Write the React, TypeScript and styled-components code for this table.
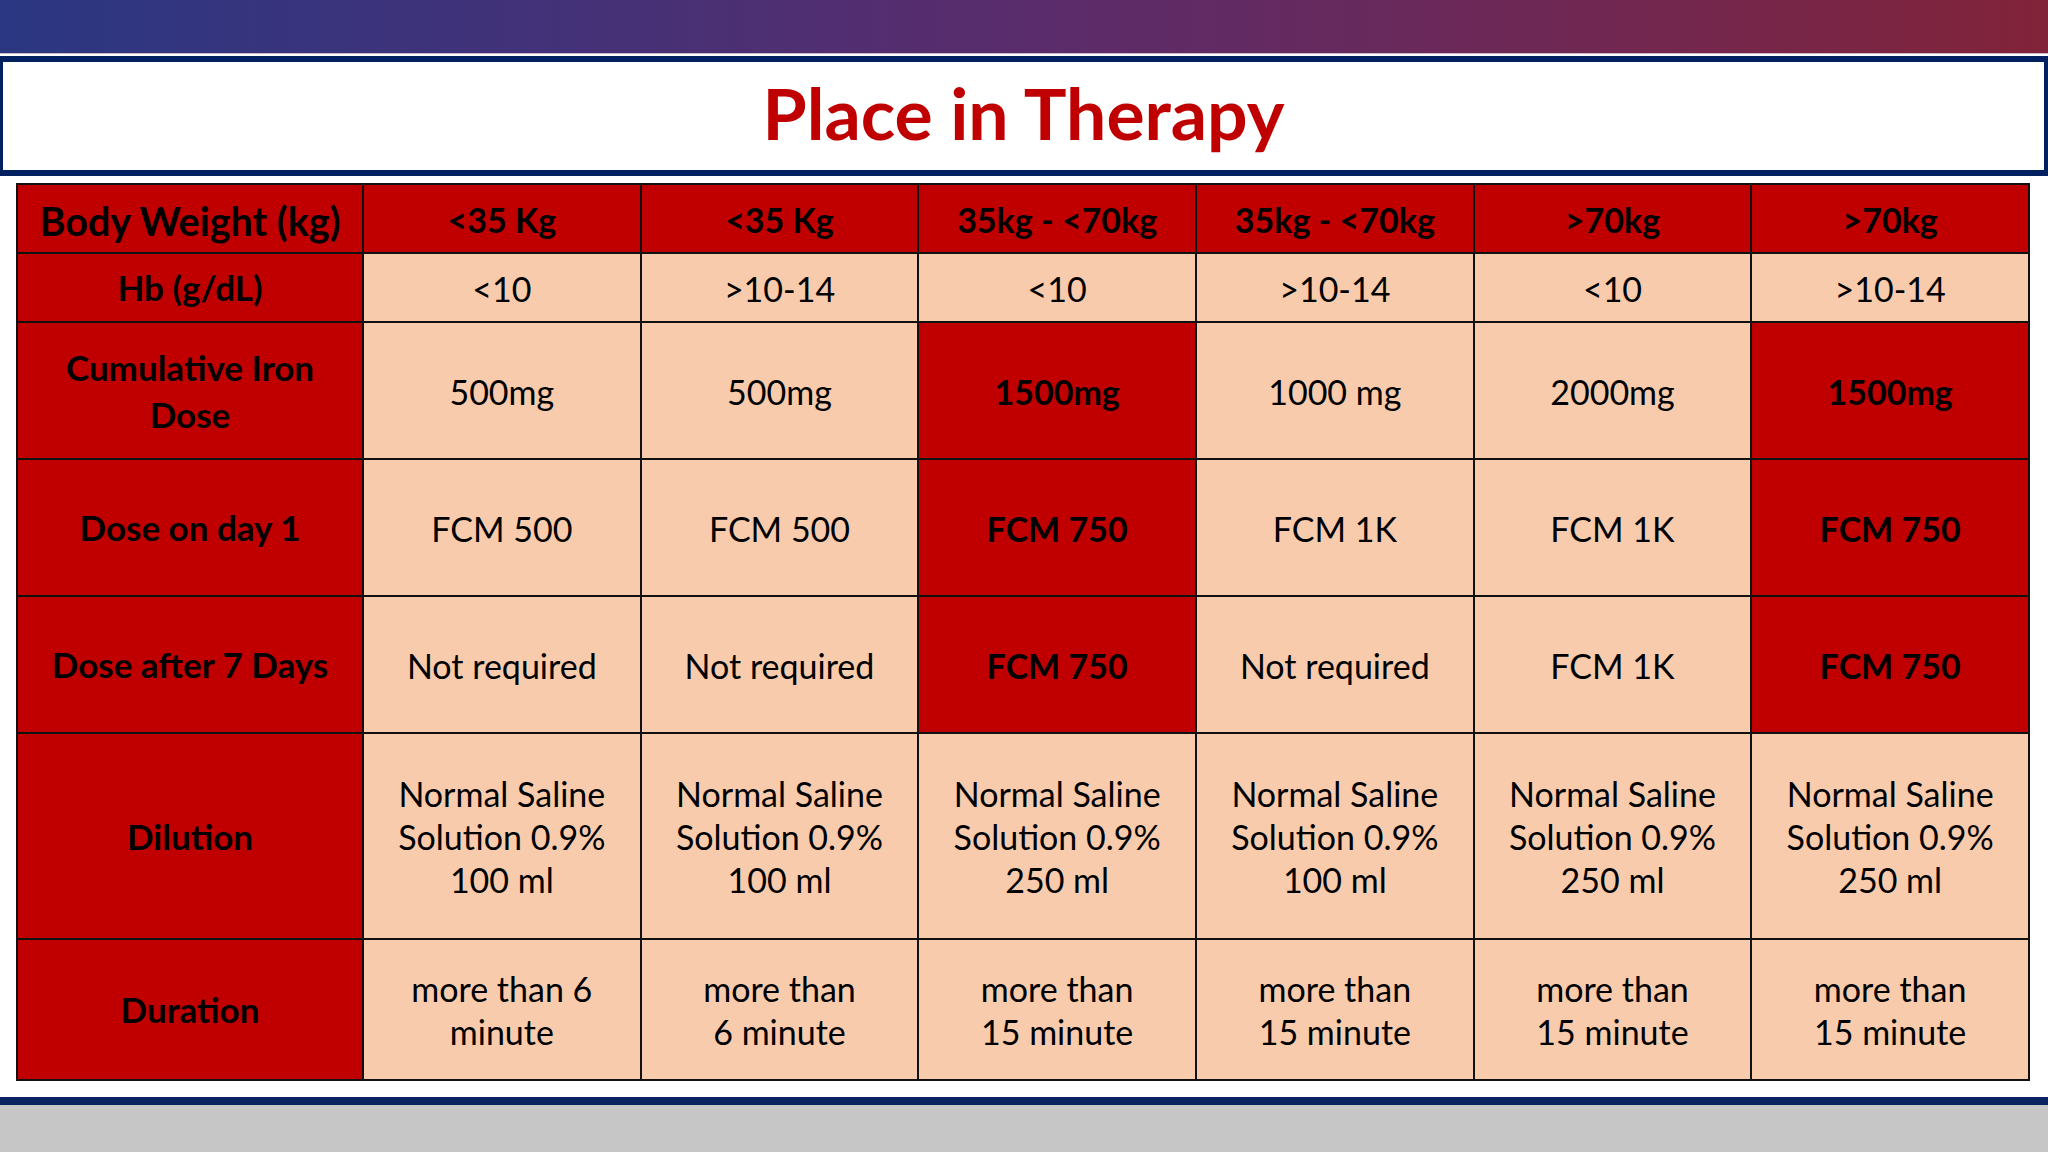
import React from 'react';
import styled, { createGlobalStyle } from 'styled-components';

const GlobalStyle = createGlobalStyle`
  html, body {
    margin: 0;
    padding: 0;
    background: #ffffff;
  }
  body {
    font-family: 'Lato', 'Open Sans', 'Noto Sans', sans-serif;
    color: #000;
  }
`;

type Cell = {
  text: string[];
  hot?: boolean;
};

type Row = {
  label: string[];
  height: number;
  cells: Cell[];
  headerRow?: boolean;
};

const c = (text: string | string[], hot = false): Cell => ({
  text: Array.isArray(text) ? text : [text],
  hot,
});

const saline = (ml: string) => c(['Normal Saline', 'Solution 0.9%', ml]);

const rows: Row[] = [
  {
    label: ['Body Weight (kg)'],
    height: 67,
    headerRow: true,
    cells: [
      c('<35 Kg', true),
      c('<35 Kg', true),
      c('35kg - <70kg', true),
      c('35kg - <70kg', true),
      c('>70kg', true),
      c('>70kg', true),
    ],
  },
  {
    label: ['Hb (g/dL)'],
    height: 67,
    cells: [c('<10'), c('>10-14'), c('<10'), c('>10-14'), c('<10'), c('>10-14')],
  },
  {
    label: ['Cumulative Iron', 'Dose'],
    height: 135,
    cells: [
      c('500mg'),
      c('500mg'),
      c('1500mg', true),
      c('1000 mg'),
      c('2000mg'),
      c('1500mg', true),
    ],
  },
  {
    label: ['Dose on day 1'],
    height: 135,
    cells: [
      c('FCM 500'),
      c('FCM 500'),
      c('FCM 750', true),
      c('FCM 1K'),
      c('FCM 1K'),
      c('FCM 750', true),
    ],
  },
  {
    label: ['Dose after 7 Days'],
    height: 135,
    cells: [
      c('Not required'),
      c('Not required'),
      c('FCM 750', true),
      c('Not required'),
      c('FCM 1K'),
      c('FCM 750', true),
    ],
  },
  {
    label: ['Dilution'],
    height: 204,
    cells: [
      saline('100 ml'),
      saline('100 ml'),
      saline('250 ml'),
      saline('100 ml'),
      saline('250 ml'),
      saline('250 ml'),
    ],
  },
  {
    label: ['Duration'],
    height: 139,
    cells: [
      c(['more than 6', 'minute']),
      c(['more than', '6 minute']),
      c(['more than', '15 minute']),
      c(['more than', '15 minute']),
      c(['more than', '15 minute']),
      c(['more than', '15 minute']),
    ],
  },
];

export default function App() {
  return (
    <>
      <GlobalStyle />
      <Slide>
        <TopBand />
        <TitleFrame>
          <Title>Place in Therapy</Title>
        </TitleFrame>
        <Grid $rows={rows.map((r) => r.height)}>
          {rows.map((row, ri) => (
            <React.Fragment key={ri}>
              <LabelCell $big={!!row.headerRow}>
                {row.label.map((line) => (
                  <Line key={line}>{line}</Line>
                ))}
              </LabelCell>
              {row.cells.map((cell, ci) => (
                <DataCell key={ci} $hot={!!cell.hot}>
                  {cell.text.map((line) => (
                    <Line key={line}>{line}</Line>
                  ))}
                </DataCell>
              ))}
            </React.Fragment>
          ))}
        </Grid>
        <Footer />
      </Slide>
    </>
  );
}

const Slide = styled.div`
  width: 2048px;
  height: 1152px;
  display: flex;
  flex-direction: column;
  overflow: hidden;
  background: #ffffff;
`;

const TopBand = styled.div`
  height: 53px;
  flex-shrink: 0;
  background: linear-gradient(
    90deg,
    #2b3782 0%,
    #413279 25%,
    #5a2c6c 50%,
    #6e2855 75%,
    #812339 100%
  );
  border-bottom: 1px solid #cdb8c8;
`;

const TitleFrame = styled.div`
  margin-top: 2px;
  height: 120px;
  box-sizing: border-box;
  flex-shrink: 0;
  border-style: solid;
  border-color: #002060;
  border-width: 6px 4px 6px 3px;
  display: flex;
  align-items: center;
  justify-content: center;
`;

const Title = styled.h1`
  margin: 0;
  padding-bottom: 6px;
  font-family: 'Lato', 'Open Sans', sans-serif;
  font-weight: 700;
  font-size: 71.5px;
  line-height: 1;
  color: #c00000;
`;

const Grid = styled.div<{ $rows: number[] }>`
  margin: 7px 0 0 16px;
  width: 2014px;
  box-sizing: border-box;
  display: grid;
  grid-template-columns: 344px repeat(6, 1fr);
  grid-template-rows: ${(p) => p.$rows.map((h) => `${h}px`).join(' ')};
  gap: 2px;
  padding: 2px;
  background: #111111;
`;

const BaseCell = styled.div`
  display: flex;
  flex-direction: column;
  align-items: center;
  justify-content: center;
  text-align: center;
  color: #000;
`;

const LabelCell = styled(BaseCell)<{ $big: boolean }>`
  background: #c00000;
  font-weight: 700;
  font-size: ${(p) => (p.$big ? '39.5px' : '35px')};
  line-height: 47px;
  padding-top: ${(p) => (p.$big ? '3px' : '0')};
`;

const DataCell = styled(BaseCell)<{ $hot: boolean }>`
  background: ${(p) => (p.$hot ? '#c00000' : '#f8cbad')};
  font-weight: ${(p) => (p.$hot ? 700 : 400)};
  font-size: 34px;
  line-height: 43px;
  padding-top: 1px;
`;

const Line = styled.span`
  display: block;
  white-space: nowrap;
`;

const Footer = styled.div`
  margin-top: auto;
  height: 55px;
  box-sizing: border-box;
  flex-shrink: 0;
  border-top: 8px solid #0a2260;
  background: #c6c6c6;
`;
